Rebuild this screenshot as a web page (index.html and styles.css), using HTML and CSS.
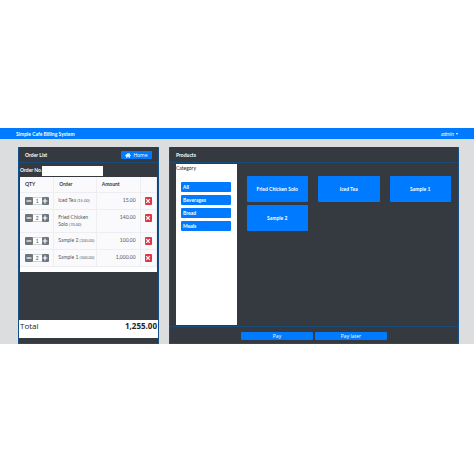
FILE: index.html
```html
<!DOCTYPE html>
<html lang="en">
<head>
	<meta charset="utf-8">
	<title>Simple Cafe Billing System</title>
	<link rel="stylesheet" href="styles.css">
</head>
<body>

	<svg class="sprite" aria-hidden="true">
		<symbol id="minus" viewBox="0 0 10 10"><path d="M1 4h8v2H1z" fill="#fff"/></symbol>
		<symbol id="plus" viewBox="0 0 10 10"><path d="M4 1h2v3h3v2H6v3H4V6H1V4h3z" fill="#fff"/></symbol>
		<symbol id="remove" viewBox="0 0 10 10"><path d="M2 2l6 6M8 2L2 8" stroke="#fff" stroke-width="2"/></symbol>
		<symbol id="house" viewBox="0 0 18 16"><path d="M9 0L0 8l1 2 8-7 8 7 1-2-3-3V1h-2v2zM9 4L3 9v6h4v-4h4v4h4V9z" fill="#fff"/></symbol>
	</svg>

	<div class="app">
		<nav class="topbar">
			<a class="brand" href="#">Simple Cafe Billing System</a>
			<a class="user" href="#">admin <span class="caret"></span></a>
		</nav>

		<main class="content">
			<section class="card order">
				<header class="card-header">
					<b>Order List</b>
					<a class="btn home" href="#"><svg class="house"><use href="#house"/></svg>Home</a>
				</header>
				<div class="order-no">
					<label for="order_number">Order No.</label>
					<input type="text" id="order_number">
				</div>
				<div class="list">
					<table>
						<colgroup>
							<col class="col-qty">
							<col class="col-order">
							<col class="col-amount">
							<col class="col-remove">
						</colgroup>
						<thead>
							<tr><th>QTY</th><th>Order</th><th>Amount</th><th></th></tr>
						</thead>
						<tbody>
							<tr>
								<td><div class="qty"><button aria-label="Less"><svg><use href="#minus"/></svg></button><input type="text" aria-label="Quantity" value="1"><button aria-label="More"><svg><use href="#plus"/></svg></button></div></td>
								<td class="item">Iced Tea <small>(15.00)</small></td>
								<td class="amount">15.00</td>
								<td><button class="remove" aria-label="Remove"><svg><use href="#remove"/></svg></button></td>
							</tr>
							<tr>
								<td><div class="qty"><button aria-label="Less"><svg><use href="#minus"/></svg></button><input type="text" aria-label="Quantity" value="2"><button aria-label="More"><svg><use href="#plus"/></svg></button></div></td>
								<td class="item">Fried Chicken Solo <small>(70.00)</small></td>
								<td class="amount">140.00</td>
								<td><button class="remove" aria-label="Remove"><svg><use href="#remove"/></svg></button></td>
							</tr>
							<tr>
								<td><div class="qty"><button aria-label="Less"><svg><use href="#minus"/></svg></button><input type="text" aria-label="Quantity" value="1"><button aria-label="More"><svg><use href="#plus"/></svg></button></div></td>
								<td class="item">Sample 2 <small>(100.00)</small></td>
								<td class="amount">100.00</td>
								<td><button class="remove" aria-label="Remove"><svg><use href="#remove"/></svg></button></td>
							</tr>
							<tr>
								<td><div class="qty"><button aria-label="Less"><svg><use href="#minus"/></svg></button><input type="text" aria-label="Quantity" value="2"><button aria-label="More"><svg><use href="#plus"/></svg></button></div></td>
								<td class="item">Sample 1 <small>(500.00)</small></td>
								<td class="amount">1,000.00</td>
								<td><button class="remove" aria-label="Remove"><svg><use href="#remove"/></svg></button></td>
							</tr>
						</tbody>
					</table>
				</div>
				<div class="total">
					<span>Total</span>
					<b>1,255.00</b>
				</div>
			</section>

			<section class="card products">
				<header class="card-header"><b>Products</b></header>
				<div class="card-body">
					<div class="categories">
						<p>Category</p>
						<div class="category-list">
							<button class="btn">All</button>
							<button class="btn">Beverages</button>
							<button class="btn">Bread</button>
							<button class="btn">Meals</button>
						</div>
					</div>
					<div class="product-grid">
						<button class="btn">Fried Chicken Solo</button>
						<button class="btn">Iced Tea</button>
						<button class="btn">Sample 1</button>
						<button class="btn">Sample 2</button>
					</div>
				</div>
				<footer class="card-footer">
					<button class="btn">Pay</button>
					<button class="btn">Pay later</button>
				</footer>
			</section>
		</main>
	</div>

</body>
</html>
```
FILE: styles.css
```css
* {
	box-sizing: border-box;
}

body {
	margin: 0;
	padding: 128px 0;
	background: #fff;
	color: #212529;
	font: 5px/8px Lato, sans-serif;
}

a {
	color: #fff;
	text-decoration: none;
}

button, input {
	font: inherit;
	border: none;
	padding: 0;
	margin: 0;
}

.sprite {
	display: none;
}

.app {
	background: #dcdddf;
}

.topbar {
	display: flex;
	justify-content: space-between;
	align-items: center;
	height: 11px;
	padding: 0 16px;
	background: #007bff;
}

.brand {
	font-weight: bold;
}

.user {
	font-style: italic;
}

.caret {
	display: inline-block;
	margin-left: 1px;
	vertical-align: 1px;
	border: 1px solid transparent;
	border-top: 2px solid #fff;
	border-bottom: none;
}

.content {
	display: grid;
	grid-template-columns: 141fr 290fr;
	gap: 10px;
	padding: 8px 15px 0 18px;
}

.card {
	display: flex;
	flex-direction: column;
	min-width: 0;
	min-height: 197px;
	background: #343a40;
	border: 1px solid #164f88;
	border-top-color: #343a40;
	border-radius: 1px 1px 0 0;
}

.card-header {
	display: flex;
	align-items: center;
	justify-content: space-between;
	height: 15px;
	padding: 0 6px;
	border-bottom: 1px solid #1b4b78;
	color: #fff;
}

.btn {
	background: #007bff;
	color: #fff;
	border-radius: 1px;
	text-align: center;
	cursor: pointer;
}

.home {
	display: flex;
	align-items: center;
	justify-content: center;
	gap: 2px;
	width: 31px;
	font-family: "Open Sans", sans-serif;
}

.house {
	width: 6px;
	height: 5px;
}

.order-no {
	display: flex;
	margin-top: 3px;
	padding-left: 1px;
	color: #fff;
	font-weight: bold;
}

.order-no label {
	width: 22px;
	white-space: nowrap;
}

.order-no input {
	width: 61px;
	height: 10px;
	background: #fff;
}

.list {
	margin: 1px 1px 0;
	padding-bottom: 5px;
	background: #fff;
}

table {
	width: 100%;
	table-layout: fixed;
	border-collapse: separate;
	border-spacing: 0;
	background: #fafafc;
	line-height: 7px;
}

.col-qty {
	width: 25%;
}

.col-order {
	width: 31%;
}

.col-amount {
	width: 32%;
}

th, td {
	padding: 4px;
	border: 1px solid #eceef1;
	border-width: 0 1px 1px 0;
	text-align: left;
	vertical-align: top;
	color: #53575c;
}

th {
	padding: 4px 4px 4px 5px;
	color: #34383c;
}

td:first-child {
	padding-left: 5px;
}

small {
	font-size: 4px;
	line-height: 4px;
}

td.item {
	padding-right: 0;
}

td.amount {
	text-align: right;
}

.qty {
	display: flex;
	height: 8px;
}

.qty button {
	display: flex;
	align-items: center;
	justify-content: center;
	width: 8px;
	border-radius: 1px;
	background: #6c757d;
}

.qty button svg, .remove svg {
	width: 6px;
	height: 6px;
}

.qty input {
	width: 9px;
	background: #fff;
	border: 1px solid #ced4da;
	border-width: 1px 0;
	text-align: center;
	color: #495057;
}

.remove {
	display: flex;
	align-items: center;
	justify-content: center;
	width: 7px;
	height: 8px;
	border-radius: 1px;
	background: #dc3545;
}

.total {
	display: flex;
	justify-content: space-between;
	height: 18px;
	margin: auto 0 5px;
	padding: 0 1px;
	background: #fff;
	font: 8px/11px "Open Sans", sans-serif;
}

.card-body {
	display: flex;
	flex: 1;
	padding: 1px 7px 1px 6px;
}

.categories {
	flex: 0 0 22%;
	background: #fff;
}

.categories p {
	margin: 0;
}

.category-list {
	display: grid;
	gap: 3px;
	padding: 10px 6px 10px 5px;
}

.category-list .btn {
	height: 10px;
	padding: 0 2px;
	text-align: left;
	font-weight: bold;
}

.product-grid {
	flex: 1;
	display: grid;
	grid-template-columns: repeat(3, 1fr);
	grid-auto-rows: 26px;
	gap: 3px 10px;
	padding: 12px 0 0 10px;
}

.product-grid .btn {
	font-weight: bold;
}

.card-footer {
	display: flex;
	justify-content: center;
	gap: 2px;
	padding: 5px 0 3px;
	border-top: 1px solid #1b4b78;
}

.card-footer .btn {
	width: 25%;
	font-family: "Open Sans", sans-serif;
}
```
